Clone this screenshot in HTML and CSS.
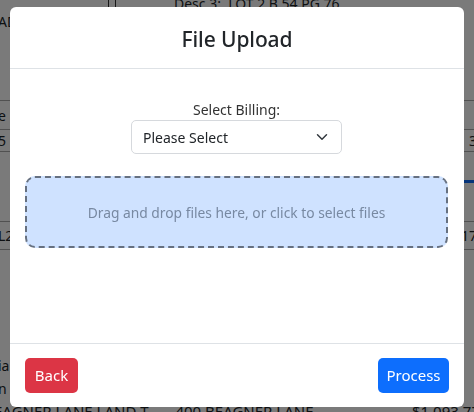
FILE: index.html
```html
<!DOCTYPE html>
<html lang="en">
<head>
<meta charset="utf-8">
<title>File Upload</title>
<link rel="stylesheet" href="styles.css">
</head>
<body>
<div class="page">
  <div class="bg-row bg-top"><span class="bg-cell c-narrow"></span><span class="bg-cell c-mid">Desc 3:&nbsp; LOT 2 B 54 PG 76</span></div>
  <div class="bg-row bg-ad"><span>AD</span></div>
  <div class="bg-row bg-spacer s71 line"></div>
  <div class="bg-row h29 line"><span>e</span></div>
  <div class="bg-row h22 line"><span>5</span><span class="r">3</span></div>
  <div class="bg-row bg-blue"></div>
  <div class="bg-row bg-spacer s39 line"></div>
  <div class="bg-row h28 line"><span>L2</span><span class="r">17</span></div>
  <div class="bg-row bg-spacer s104"></div>
  <div class="bg-row h23"><span>ia</span></div>
  <div class="bg-row h22"><span>n</span></div>
  <div class="bg-row bg-bottom"><span>EAGNER LANE LAND T...&nbsp;&nbsp;&nbsp; 400 BEAGNER LANE</span><span class="r">$1,093.77</span></div>
</div>
<div class="backdrop"></div>
<div class="modal">
  <div class="modal-header"><h1 class="modal-title">File Upload</h1></div>
  <div class="modal-body">
    <div class="field">
      <label class="field-label" for="billing">Select Billing:</label>
      <div class="select" id="billing">
        <span>Please Select</span>
        <svg class="chev" width="12" height="12" viewBox="0 0 16 16"><path d="M2 5l6 6 6-6" fill="none" stroke="#343a40" stroke-width="2" stroke-linecap="round" stroke-linejoin="round"/></svg>
      </div>
    </div>
    <div class="dropzone">Drag and drop files here, or click to select files</div>
  </div>
  <div class="modal-footer">
    <button class="btn btn-danger">Back</button>
    <button class="btn btn-primary">Process</button>
  </div>
</div>
</body>
</html>
```
FILE: styles.css
```css
html, body { margin: 0; padding: 0; }
body {
  font-family: "Noto Sans", "Open Sans", sans-serif;
  color: #212529;
  background: #fff;
  width: 474px;
  height: 412px;
  overflow: hidden;
}
.page {
  font-size: 14px;
  color: #212529;
}
.bg-row {
  display: flex;
  justify-content: space-between;
  align-items: center;
  overflow: hidden;
  white-space: nowrap;
  box-sizing: border-box;
  flex: none;
}
.line { border-bottom: 1px solid #aaa; }
.bg-top { height: 8px; align-items: flex-end; justify-content: flex-start; padding-left: 110px; }
.bg-top .c-narrow { width: 6px; height: 8px; border-left: 1px solid #333; border-right: 1px solid #333; }
.bg-top .c-mid { margin-left: 58px; line-height: 8px; margin-top: -6px; font-size: 14px; }
.bg-ad { height: 22px; align-items: flex-end; }
.bg-ad span { margin-left: -4px; line-height: 16px; }
.s71 { height: 71px; }
.s39 { height: 39px; }
.s104 { height: 104px; }
.h29 { height: 29px; }
.h22 { height: 22px; }
.h28 { height: 28px; }
.h23 { height: 23px; }
.bg-row span { margin-left: -2px; }
.bg-row .r { margin-right: -3px; }
.bg-blue { height: 3px; background: #0d6efd; margin: 28px 0 0 440px; }
.bg-bottom { height: 24px; font-size: 15px; }
.bg-bottom span { margin-left: -6px; }
.bg-bottom .r { margin-right: -6px; }

.backdrop {
  position: fixed;
  inset: 0;
  background: rgba(0, 0, 0, 0.52);
}
.modal {
  position: fixed;
  top: 7px;
  left: 10px;
  width: 454px;
  height: 400px;
  background: #fff;
  border-radius: 6px;
  display: flex;
  flex-direction: column;
  overflow: hidden;
}
.modal-header {
  height: 62px;
  flex: none;
  border-bottom: 1px solid #dee2e6;
  display: flex;
  align-items: center;
  justify-content: center;
  box-sizing: border-box;
  padding-top: 2px;
}
.modal-title {
  margin: 0;
  font-size: 21px;
  font-weight: 500;
  color: #212529;
  letter-spacing: -0.1px;
}
.modal-body {
  flex: 1;
  padding: 31px 16px 0 15px;
  display: flex;
  flex-direction: column;
}
.field {
  display: flex;
  flex-direction: column;
  align-items: center;
  flex: none;
}
.field-label {
  font-size: 14px;
  color: #333;
  line-height: 20px;
}
.select {
  width: 211px;
  height: 34px;
  flex: none;
  box-sizing: border-box;
  border: 1px solid #d6d9dd;
  border-radius: 5px;
  display: flex;
  align-items: center;
  justify-content: space-between;
  padding: 0 13px 0 11px;
  font-size: 14px;
  color: #212529;
}
.chev { display: block; }
.dropzone {
  margin-top: 22px;
  height: 72px;
  flex: none;
  box-sizing: border-box;
  border: 2px dashed #667080;
  border-radius: 10px;
  background: #cfe2ff;
  color: #7889a2;
  font-size: 13.8px;
  display: flex;
  align-items: center;
  justify-content: center;
}
.modal-footer {
  height: 64px;
  flex: none;
  border-top: 1px solid #dee2e6;
  box-sizing: border-box;
  display: flex;
  align-items: center;
  justify-content: space-between;
  padding: 0 15px;
}
.btn {
  height: 35px;
  border: none;
  border-radius: 5px;
  color: #fff;
  font-family: "Noto Sans", "Open Sans", sans-serif;
  font-size: 15px;
  line-height: 35px;
  padding: 0;
}
.btn-danger { background: #dc3545; width: 53px; }
.btn-primary { background: #0d6efd; width: 71px; }
```
